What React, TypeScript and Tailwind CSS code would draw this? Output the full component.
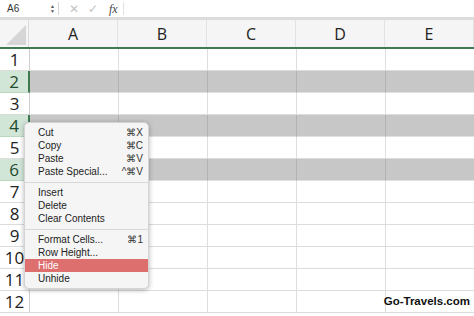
import React from 'react'

const cols = ['A', 'B', 'C', 'D', 'E']
const rows = [1, 2, 3, 4, 5, 6, 7, 8, 9, 10, 11, 12]
const hidden = [2, 4, 6]

type Item = { label: string; key?: string; active?: boolean } | 'sep'

const menu: Item[] = [
  { label: 'Cut', key: '⌘X' },
  { label: 'Copy', key: '⌘C' },
  { label: 'Paste', key: '⌘V' },
  { label: 'Paste Special...', key: '^⌘V' },
  'sep',
  { label: 'Insert' },
  { label: 'Delete' },
  { label: 'Clear Contents' },
  'sep',
  { label: 'Format Cells...', key: '⌘1' },
  { label: 'Row Height...' },
  { label: 'Hide', active: true },
  { label: 'Unhide' },
]

export default function App() {
  return (
    <div className="relative w-[474px] h-[316px] overflow-hidden bg-white font-['Open_Sans',sans-serif]">
      {/* formula bar */}
      <div className="flex items-center h-[17px] text-[10px] text-[#333]">
        <div className="w-[58px] flex items-center justify-between pl-[7px] pr-[3px] font-['Liberation_Sans',sans-serif]">
          <span>A6</span>
          <span className="flex flex-col text-[5px] leading-[5px] text-[#555]">
            <span>▲</span>
            <span>▼</span>
          </span>
        </div>
        <div className="w-px h-[13px] bg-[#d5d5d5]" />
        <span className="ml-[10px] text-[#c4c4c4] text-[12px]">✕</span>
        <span className="ml-[9px] text-[#c4c4c4] text-[12px]">✓</span>
        <span className="ml-[11px] italic font-['Liberation_Serif',serif] text-[12px] text-[#444]">fx</span>
        <div className="ml-[5px] w-px h-[13px] bg-[#e2e2e2]" />
      </div>
      <div className="h-[3px] bg-[#dcdcdc]" />

      {/* column header */}
      <div className="flex h-[29px] bg-[#f5f5f5] border-b-2 border-[#3f7a52]">
        <div className="w-[30px] relative border-r border-[#dcdcdc]">
          <div className="absolute right-[2px] bottom-[2px] w-0 h-0 border-l-[20px] border-l-transparent border-b-[20px] border-b-[#d6d6d6]" />
        </div>
        {cols.map(c => (
          <div key={c} className="w-[89px] shrink-0 flex items-center justify-center text-[16px] text-[#222] border-r border-[#e2e2e2]">
            {c}
          </div>
        ))}
      </div>

      {/* rows */}
      {rows.map(r => {
        const sel = hidden.includes(r)
        return (
          <div key={r} className="flex h-[22px]">
            <div className={`w-[30px] shrink-0 flex items-center justify-center text-[17px] border-b ${sel ? 'bg-[#d2e6d8] text-[#1f4a2e] border-r-2 border-r-[#3f7a52] border-b-[#bcd6c4]' : 'bg-white text-[#222] border-r border-r-[#cfcfcf] border-b-[#dcdcdc]'}`}>
              {r}
            </div>
            {cols.map(c => (
              <div key={c} className={`w-[89px] shrink-0 border-r border-b ${sel ? 'bg-[#c7c7c7] border-r-[#b3b3b3] border-b-[#e0e0e0]' : 'border-r-[#dedede] border-b-[#dcdcdc]'}`} />
            ))}
          </div>
        )
      })}

      {/* context menu */}
      <div className="absolute left-[24px] top-[122px] w-[125px] py-[3px] bg-[#f5f5f5] rounded-[5px] shadow-[0_1px_5px_rgba(0,0,0,0.3)] border border-[#d4d4d4] font-['Liberation_Sans',sans-serif] text-[10px] text-[#222]">
        {menu.map((m, i) =>
          m === 'sep' ? (
            <div key={i} className="h-[8px] flex items-center">
              <div className="w-full h-px bg-[#d8d8d8]" />
            </div>
          ) : (
            <div key={i} className={`h-[13px] flex items-center justify-between pl-[13px] pr-[5px] ${m.active ? 'bg-[#de6f6f] text-white' : ''}`}>
              <span>{m.label}</span>
              {m.key && <span className="text-[#333]">{m.key}</span>}
            </div>
          )
        )}
      </div>

      <div className="absolute right-[4px] bottom-[6px] font-['Liberation_Sans',sans-serif] font-bold text-[11.5px] text-[#111]">
        Go-Travels.com
      </div>
    </div>
  )
}
